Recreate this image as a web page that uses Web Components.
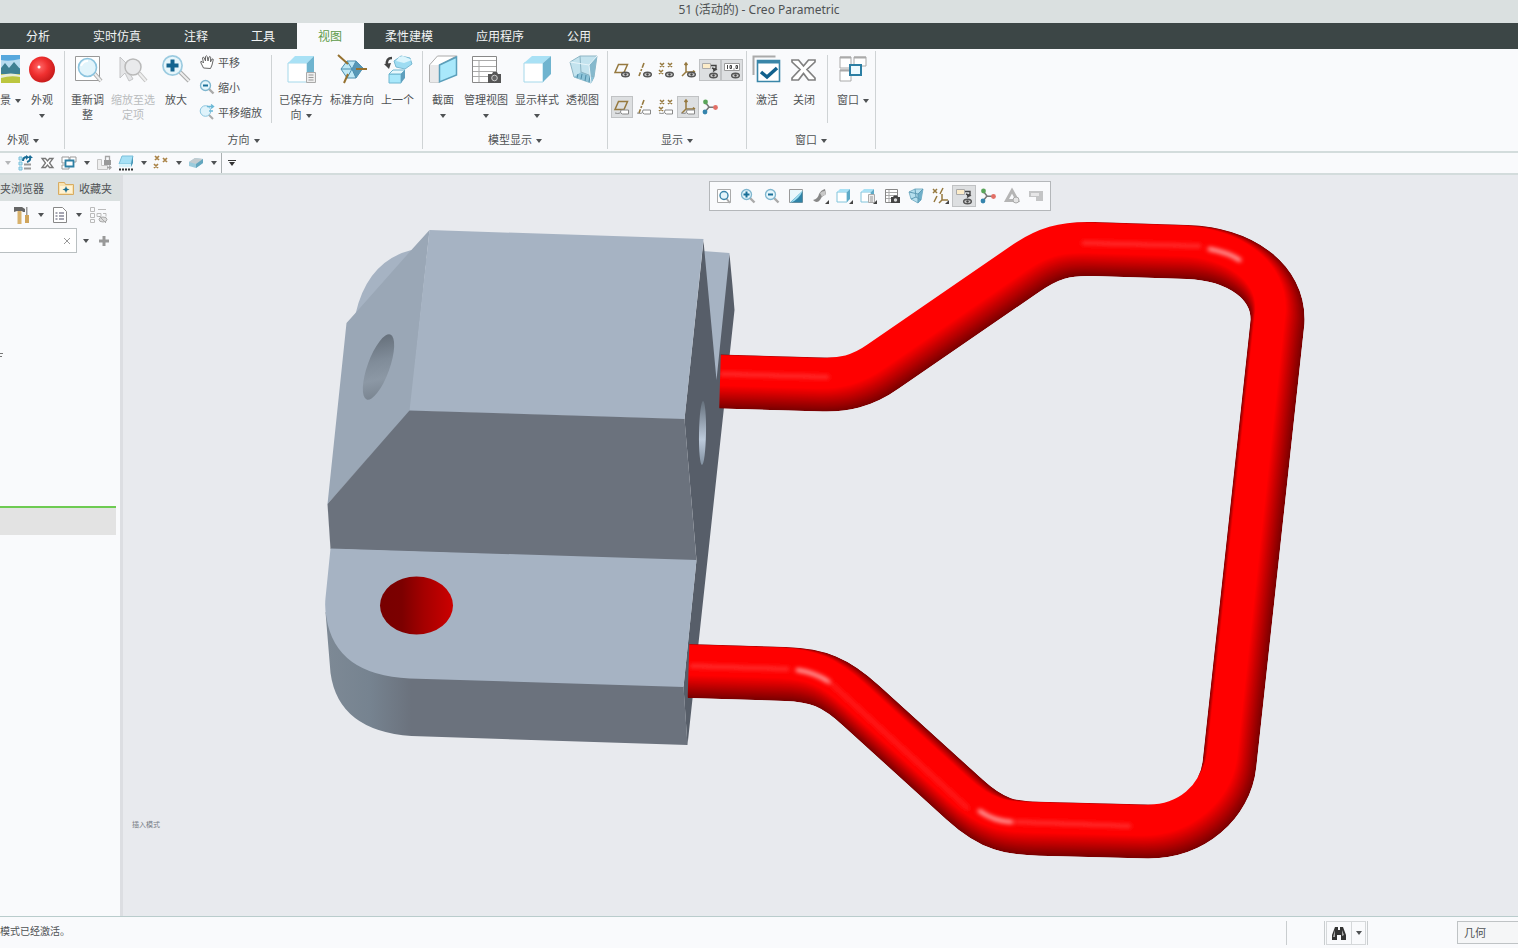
<!DOCTYPE html>
<html lang="zh-CN">
<head>
<meta charset="utf-8">
<title>51 (活动的) - Creo Parametric</title>
<style>
  html, body {
    height: 100%;
    margin: 0;
  }
  body {
    font-family: "Noto Sans", "Noto Sans CJK SC", sans-serif;
    font-size: 11px;
    color: #4f5254;
    overflow: hidden;
    --panel: #f9fafc;
    --bar: #dae0e0;
    --line: #d3dcdc;
  }
</style>
</head>
<body>
<app-window></app-window>

<script>
// Shared icon pieces, drawn on a 16px or a 28px grid
const eye = `<ellipse cx="11.500" cy="12.500" rx="3.800" ry="2.300" fill="#ccc" stroke="#555" stroke-width="1.500"/><circle cx="11.500" cy="12.500" r="1.200" fill="#444"/>`;
const tag = `<path d="M6 14q-2 1-5 0M7 11h7.500v4h-6q-2-.5-2-2z" fill="#fff" stroke="#888"/>`;
const plane = `<path d="M4.500 2.500h9l-3.500 8h-9z" fill="none" stroke="#96793f" stroke-width="1.500"/>`;
const axis = `<path d="M8 1L3 14" fill="none" stroke="#96793f" stroke-width="1.600" stroke-dasharray="5 1.500 2 1.500"/>`;
const points = `<path d="M2 1l4 4M6 1L2 5M10 1l4 4M14 1l-4 4M1 8l4 4M5 8l-4 4" fill="none" stroke="#96793f" stroke-width="1.500"/>`;
const csys = `<path d="M6 1v9l9 0M6 10l-4 4M4.500 3L6 1l1.500 2M13 8.500l2 1.500" fill="none" stroke="#96793f" stroke-width="1.500"/>`;
const camera = `<path d="M7 9h2l1-1.500h3L14 9h2v6H7z" fill="#444"/><circle cx="11.500" cy="12" r="1.700" fill="#ddd"/>`;
const lens = (sign) => `<path d="M10 10l4.500 4.500" stroke="#aaa" stroke-width="2.400"/><circle cx="6.500" cy="6.500" r="5" fill="#e4f5fb" stroke="#7fb6cf" stroke-width="1.300"/>${sign}`;
const blueSign = (d) => `<path d="${d}" stroke="#1a6f98" stroke-width="2"/>`;

const ICONS = {
  scene: [20, 28, `<path fill="#57a8dd" d="M0 0h19v28H0z"/><path fill="#b8dcef" d="M0 5q8 2 19-1v9H0z"/><path fill="#3e8092" d="M0 13l4-5 4 5 5-6 6 7v7H0z"/><path fill="#bcc63f" d="M0 19h19v9H0z"/><path fill="#e8ecd8" d="M0 20q10-3 19 0v2q-9-2-19 1z"/>`],
  ball: [28, 28, `<radialGradient id="b" cx=".4" cy=".4" r=".65"><stop offset="0" stop-color="#ff6a6a"/><stop offset=".5" stop-color="#f03030"/><stop offset="1" stop-color="#c31818"/></radialGradient><circle cx="14" cy="14.500" r="13" fill="url(#b)"/><circle cx="11" cy="12" r="1.500" fill="#fff"/>`],
  refit: [28, 28, `<path d="M1.500 1.500h24v24h-24z" fill="#fff" stroke="#999"/><path d="M20 18l7 8" stroke="#aaa" stroke-width="4"/><path d="M20 18l7 8" stroke="#eee" stroke-width="2"/><circle cx="13.500" cy="12.500" r="9" fill="#e2f4fb" stroke="#8cc4df" stroke-width="1.600"/><path d="M7 11q2-5 7-5" fill="none" stroke="#fff" stroke-width="2"/>`],
  zoomsel: [28, 28, `<path d="M1 2v21l5-5 4 8 4-2-4-7h6z" fill="#e4e5e7" stroke="#c4c5c7"/><path d="M20 18l7 8" stroke="#c2c2c2" stroke-width="4"/><path d="M20 18l7 8" stroke="#eee" stroke-width="2"/><circle cx="14" cy="12" r="8" fill="#e9eaec" stroke="#b9b9b9" stroke-width="1.500"/>`],
  zoomin: [28, 28, `<path d="M18 17l9 9" stroke="#aaa" stroke-width="4"/><path d="M18 17l9 9" stroke="#eee" stroke-width="2"/><circle cx="10.500" cy="10.500" r="9.600" fill="#e8f6fb" stroke="#9ccbe0" stroke-width="1.700"/><path d="M10.500 4.500v12M4.500 10.500h12" stroke="#14648f" stroke-width="4"/>`],
  hand: [16, 16, `<path d="M4.500 14L2 9q-1-2 1-1.500L4.500 9 3.500 4q.5-1.500 1.500-.5L6.500 7 6.500 2.500q.8-1.500 1.700 0L9 7l1-4q1-1.200 1.700.2L11.500 8l1.500-3q1.500-.5 1.200 1L13 11l-1.500 3.500z" fill="#fff" stroke="#666"/>`],
  zoomout: [16, 16, lens(blueSign("M4 6.500h5"))],
  panzoom: [16, 16, `<path d="M9 10l5 5" stroke="#aaa" stroke-width="2"/><circle cx="6.500" cy="7" r="5.300" fill="#dff3fb" stroke="#8cc6e0"/><path d="M8 2.500h6M12 .5l2.500 2-2.500 2M14 7h-4" fill="none" stroke="#6bb8d6" stroke-width="1.400"/>`],
  savedview: [28, 28, `<path d="M1 8h19v19H1z" fill="#fff" stroke="#a5d8ea"/><path d="M1 8l7-7h19l-7 7z" fill="#a9e1f5"/><path d="M20 8l7-7v18l-7 8z" fill="#6fb4cf"/><path d="M19.500 17.500h9v10h-9z" fill="#eee" stroke="#aaa"/><path d="M21.500 20h5M21.500 22.500h5M21.500 25h5" stroke="#999"/>`],
  stdview: [28, 28, `<path d="M3 14l6-8h9l7 7-7 10H9z" fill="#bfe8f5" stroke="#4c8fb0"/><path d="M14 14l4-8 7 7-7 10z" fill="#5898b7"/><path d="M3 14h11l4-8M14 14l-5 9M9 6l5 8 4 9" fill="none" stroke="#4c8fb0"/><path d="M0 0l10 9M18 14h11M10 19l-4 9" stroke="#96712f" stroke-width="2"/>`],
  prevview: [28, 28, `<path d="M10 6l7-5 9 2 2 6-7 5-9-2z" fill="#9edcf2" stroke="#7ab9d2"/><path d="M12 6l8 2 8-3-9-4-4 1z" fill="#dbf5fd"/><path d="M5 19h12v9H5z" fill="#a9e8fb" stroke="#6fb6d0"/><path d="M5 19l4-4h12l-4 4z" fill="#e6f8fd" stroke="#6fb6d0"/><path d="M17 19l4-4v8l-4 5z" fill="#5f9fbd"/><path d="M8 3Q2 3 3 10" fill="none" stroke="#444" stroke-width="2.500"/><path d="M0 9l7-1-2 6z" fill="#444"/>`],
  section: [28, 28, `<path d="M.5 10l8-9h19l-17 9v17H.5z" fill="#fff" stroke="#aaa"/><path d="M1 10h9v17H1z" fill="#e9e9ea"/><path d="M10.500 10l17-8v18l-17 7z" fill="#a9e8fb" stroke="#5b9fbb" stroke-width="1.500"/>`],
  manage: [28, 28, `<path d="M.5 1.500h24v26H.5z" fill="#fff" stroke="#888"/><path d="M7 5v22M1 5.500h23M1 11.500h23M1 16.500h23M1 21.500h23" stroke="#aaa"/><path d="M16 19h4l1-2h4l1 2h3v9H16z" fill="#555"/><circle cx="22.500" cy="23" r="2.800" fill="#666" stroke="#ccc"/>`],
  cube: [28, 28, `<path d="M1 8h19v19H1z" fill="#fff" stroke="#a5d8ea"/><path d="M1 8l8-7h19l-8 7z" fill="#a9e1f5"/><path d="M20 8l8-7v18l-8 8z" fill="#6fb4cf"/>`],
  persp: [28, 28, `<path d="M1 7l10-6h17l-3 21-3 6L5 22z" fill="#c3e3ee" stroke="#8fb6c5"/><path d="M20 10l8-9-3 21-3 6z" fill="#86b9cd"/><path d="M5 22l7-5 13 5-3 6z" fill="#8cc3d8"/><path d="M11 1l1 16M12 17l13 5" fill="none" stroke="#8ab3c3"/><path d="M9 19l-1 4M13 19l-1 5M17 20l-1 6M21 21l-1 6" stroke="#4f8da8"/><path d="M1 7l19 3 8-9M20 10l2 18" fill="none" stroke="#e8f5fa"/>`],
  activate: [28, 28, `<path d="M.5 20V1.500h22" fill="none" stroke="#aaa" stroke-width="2"/><path d="M4.500 5.500h22v21h-22z" fill="#fff" stroke="#3a86a8" stroke-width="1.600"/><path d="M4 7h23" stroke="#3a86a8" stroke-width="3"/><path d="M8 17l6 5 10-9" fill="none" stroke="#11618d" stroke-width="3.500"/>`],
  closebig: [28, 28, `<path d="M2 5h6.500l5 6 5-6H25v2l-8 7.500 8 8.500v2h-6.500l-5-6.500-5 6.500H2v-2l8-8.500L2 7z" fill="#fff" stroke="#808080" stroke-width="1.700"/>`],
  windows: [28, 28, `<g fill="#fff" stroke="#aaa"><path d="M1 2h11v11H1zM15 2h12v9H15zM1 15h11v11H1z"/></g><path d="M1 2.500h11M15 2.500h12M1 15.500h11" stroke="#aaa" stroke-width="2"/><path d="M11 10h11v10H11z" fill="#eefaff" stroke="#2c7fa4" stroke-width="2"/>`],
  planeEye: [16, 16, plane + eye], axisEye: [16, 16, axis + eye], pointsEye: [16, 16, points + eye], csysEye: [16, 16, csys + eye],
  planeTag: [16, 16, plane + tag], axisTag: [16, 16, axis + tag], pointsTag: [16, 16, points + tag], csysTag: [16, 16, csys + tag],
  annot: [16, 16, `<path d="M.5 1.500h8v5h-8z" fill="#fcecc9" stroke="#aaa"/><path d="M9 3.500h5v4h-3M10 6l4 1.500-3 2" fill="none" stroke="#444" stroke-width="1.400"/><g transform="translate(0 1)">${eye}</g>`],
  dims: [16, 16, `<path d="M.5 1.500h15v7H.5z" fill="#fff" stroke="#999"/><path d="M3.500 3v4M6 3.500h1.500v3H6zM9.500 7h1M12 3.500h1.500v3H12z" fill="none" stroke="#444"/><g transform="translate(0 1)">${eye}</g>`],
  spin: [16, 16, `<path d="M3.500 3.500L7 8l7 .5M7 8l-4 5" fill="none" stroke="#777" stroke-width="1.500"/><circle cx="3.500" cy="3" r="2.400" fill="#5aa55a"/><circle cx="13.500" cy="8.500" r="2.400" fill="#e26f66"/><circle cx="3" cy="13" r="2.400" fill="#3584ad"/>`],
  regen: [16, 16, `<path d="M2 2h3v3H2zM2 7h3v3H2zM2 12h3v3H2z" fill="#b9e5f5" stroke="#7cc0da"/><path d="M7 9.500h7M7 13.500h7" stroke="#999" stroke-width="2"/><path d="M6 6Q6 2 10 2M13 2q1 4-3 5" fill="none" stroke="#1b6d96" stroke-width="2"/><path d="M9 0l3 2-3 3zM11 3l2-3 3 3z" fill="#1b6d96"/>`],
  close: [16, 16, `<path d="M3 3.500h3.500L8.500 6l2-2.500H14L10.500 8l3.500 4.500h-3.500l-2-2.500-2 2.500H3L6.500 8z" fill="#fff" stroke="#777" stroke-width="1.300"/>`],
  windowsSmall: [16, 16, `<path d="M1 2h7v6H1zM9 2h6v5H9zM1 10h7v4H1z" fill="#fff" stroke="#999"/><path d="M4.500 5.500h8v6h-8z" fill="#fff" stroke="#2c7fa4" stroke-width="1.800"/>`],
  lock: [16, 16, `<path d="M1.500 4.500h4v6h6v4h-10z" fill="#eee" stroke="#c4c4c4"/><path d="M8 5h7v5H8z" fill="#999"/><path d="M9.500 5V1.500h4V5M11 12.500h4M13 10.500l2 2-2 2" fill="none" stroke="#a5a5a5" stroke-width="1.300"/>`],
  shade: [16, 16, `<path d="M1 9l3-8h11l-2 8z" fill="#a7e1f6" stroke="#7bc0da"/><path d="M1 9h12v3H1z" fill="#d9f3fb"/><path d="M13 9l2-8v7l-2 4z" fill="#4798b9"/><path d="M1 14.500h14" stroke="#333" stroke-width="2" stroke-dasharray="2 1"/>`],
  pointsOnly: [16, 16, `<path d="M2 1l4 4M6 1L2 5M10 3l4 4M14 3l-4 4M1 9l4 4M5 9l-4 4" stroke="#a98245" stroke-width="1.700"/>`],
  eraser: [16, 16, `<path d="M1 7l6-4 8 1v4l-7 5-7-2z" fill="#9bcbdc"/><path d="M1 7l6-4 8 1-7 5z" fill="#c3ccd0"/><path d="M8 9l7-5v4l-7 5z" fill="#63a6be"/>`],
  folder: [16, 16, `<path d="M.5 2.500h6l1 2h8v10H.5z" fill="#f8e2b0" stroke="#d8ac62"/><path d="M2 6h12v7H2z" fill="#fff2d2"/><path d="M8 6l1 2.500 2.500 1L9 10.500 8 13l-1-2.500-2.500-1L7 8.500z" fill="#1c6f93"/>`],
  tools: [16, 16, `<path d="M0 0h8l3 2v3H9L8 4H3L0 5z" fill="#666"/><path d="M3.500 4h4v13h-4z" fill="#d8b26d"/><path d="M12 0h1.500v8H12z" fill="#999"/><path d="M11 8h4v8h-4z" fill="#cfa45b"/>`],
  list: [16, 16, `<path d="M1.500.5h9l4 4v11h-13z" fill="#fff" stroke="#888"/><path d="M3.500 6h2M3.500 9h2M3.500 12h2M7 6h5M7 9h5M7 12h5" stroke="#889" stroke-width="1.300"/>`],
  treehide: [16, 16, `<path d="M.5.500h4v4h-4zM.5 6.500h4v4h-4zM.5 12.500h4v3h-4zM8 2.500h8M7 6.500h4v3H7zM13 6.500h3v3" fill="none" stroke="#bbb"/><ellipse cx="13" cy="12.500" rx="4" ry="2.500" fill="#ddd" stroke="#aaa"/><path d="M9 9l7 7" stroke="#aaa"/>`],
  plus: [16, 16, `<path d="M8 3v10M3 8h10" stroke="#999" stroke-width="3"/>`],
  fitSmall: [16, 16, `<path d="M1.500 1.500h13v13h-13z" fill="#fff" stroke="#aaa"/><path d="M10 10l4 5" stroke="#aaa" stroke-width="2"/><circle cx="8" cy="7.500" r="4" fill="#e4f5fb" stroke="#3b86ab" stroke-width="1.400"/>`],
  zoominSmall: [16, 16, lens(blueSign("M3.500 6.500h6M6.500 3.500v6"))],
  repaint: [16, 16, `<path d="M1.500 1.500h13v13h-13z" fill="#eaf8fd" stroke="#999"/><path d="M14.500 3v11.500H2z" fill="#2f83a7"/><path d="M2 15Q11 12 15 2l-5 5z" fill="#9cdcf0"/>`],
  style: [16, 16, `<path d="M1 12q5-1 6-6 2-4 6-5l1 5q-4 2-6 6-3 4-7 0z" fill="#888"/><path d="M8 5q2-2 5-2l1 4q-3 0-4 2z" fill="#c8c8c8"/><path d="M17 12v4h-4z" fill="#444"/>`],
  cubeSmall: [16, 16, `<path d="M1 4h10v10H1z" fill="#fff" stroke="#82c4db"/><path d="M1 4l3-3h10l-3 3z" fill="#a9e1f5"/><path d="M11 4l3-3v10l-3 3z" fill="#5eaac7"/><path d="M17 12v4h-4z" fill="#444"/>`],
  savedSmall: [16, 16, `<path d="M1 4h10v10H1z" fill="#fff" stroke="#82c4db"/><path d="M1 4l3-3h10l-3 3z" fill="#a9e1f5"/><path d="M11 4l3-3v10l-3 3z" fill="#5eaac7"/><path d="M8.500 6.500h6v8h-6z" fill="#eee" stroke="#aaa"/><path d="M10 9h3M10 11h3M10 13h3" stroke="#999"/><path d="M17 12v4h-4z" fill="#444"/>`],
  manageSmall: [16, 16, `<path d="M1.500 1.500h12v13h-12z" fill="#fff" stroke="#888"/><path d="M5 2v12M2 4.500h11M2 7.500h11M2 10.500h11" stroke="#aaa"/>${camera}`],
  perspSmall: [16, 16, `<path d="M1 4l6-3h8l-2 11-3 3-7-4z" fill="#b5dfee" stroke="#7fb4c9"/><path d="M10 6l5-5-2 11-3 3z" fill="#6fafc9"/><path d="M1 4l9 2 5-5M10 6v9M7 1l1 8 5 3M8 9l-5 2" fill="none" stroke="#5f9bb5"/>`],
  datum: [16, 16, `<path d="M1 1l4 4M5 1L1 5M11 0L8 6M5 8l-3 6M10 6v6h6M10 12l-3 3" fill="none" stroke="#96793f" stroke-width="1.500"/><path d="M17 12v4h-4z" fill="#444"/>`],
  sim: [16, 16, `<path d="M8 2.500l5.500 10h-11z" fill="none" stroke="#b5b5b5" stroke-width="3"/><circle cx="12" cy="12" r="3" fill="#e4e4e4" stroke="#aaa"/>`],
  flag: [16, 16, `<path d="M1 3h14v10H8V9H1z" fill="#c4c5c6"/><path d="M3 5h8v3H3z" fill="#e6e6e7"/>`],
  find: [16, 16, `<path d="M4 2h3v3h2V2h3l3 8v5h-5v-5H6v5H1v-5z" fill="#333"/><path d="M4 5l-2 7h2zM11 5v6l2-1z" fill="#aaa"/>`]
};

class CreoIcon extends HTMLElement {
  constructor() {
    super();
    this.attachShadow({ mode: "open" });
  }

  connectedCallback() {
    const [w, h, art] = ICONS[this.getAttribute("name")];
    this.shadowRoot.innerHTML = `
      <style>
        :host { display: inline-flex; flex: none; }
        svg { display: block; overflow: visible; }
      </style>
      <svg width="${w}" height="${h}" viewBox="0 0 ${w} ${h}" aria-hidden="true">${art}</svg>
    `;
  }
}
customElements.define("creo-icon", CreoIcon);

class DropCaret extends HTMLElement {
  constructor() {
    super();
    this.attachShadow({ mode: "open" });
    this.shadowRoot.innerHTML = `
      <style>
        :host {
          display: inline-block;
          vertical-align: middle;
          width: 0;
          height: 0;
          border: 3px solid transparent;
          border-top: 4px solid currentColor;
          border-bottom: 0;
        }
        :host([dim]) { opacity: .4; }
        :host([after]) { margin-left: 4px; }
      </style>
    `;
  }
}
customElements.define("drop-caret", DropCaret);

// Large ribbon command: icon on top, one or two label lines under it
class RibbonButton extends HTMLElement {
  constructor() {
    super();
    this.attachShadow({ mode: "open" });
  }

  connectedCallback() {
    const label = this.getAttribute("label").replace("|", "<br>");
    const caret = this.getAttribute("caret");
    this.shadowRoot.innerHTML = `
      <style>
        :host { display: block; }
        button {
          display: flex;
          flex-direction: column;
          align-items: center;
          gap: 9px;
          padding: 6px 0 0;
          border: 0;
          background: none;
          font: inherit;
          line-height: 15px;
          color: inherit;
          white-space: nowrap;
        }
        button:disabled { color: #b9bcbe; }
      </style>
      <button ${this.hasAttribute("disabled") ? "disabled" : ""}>
        <creo-icon name="${this.getAttribute("icon")}"></creo-icon>
        <span>${label}${caret === "below" ? "<br>" : ""}${caret ? `<drop-caret ${caret === "below" ? "" : "after"}></drop-caret>` : ""}</span>
      </button>
    `;
  }
}
customElements.define("ribbon-button", RibbonButton);

// Small command with optional text at its right; pressed shows the toggled look
class ToolButton extends HTMLElement {
  constructor() {
    super();
    this.attachShadow({ mode: "open" });
  }

  connectedCallback() {
    this.shadowRoot.innerHTML = `
      <style>
        :host { display: block; }
        button {
          display: flex;
          align-items: center;
          justify-content: center;
          gap: 3px;
          width: 100%;
          height: 100%;
          padding: 0;
          border: 1px solid transparent;
          background: none;
          font: inherit;
          color: inherit;
          white-space: nowrap;
        }
        :host([text]) button { justify-content: flex-start; border: 0; }
        :host([pressed]) button { background: #dddfe1; border-color: #c0c2c4; }
      </style>
      <button title="${this.getAttribute("tip") || ""}" aria-pressed="${this.hasAttribute("pressed")}">
        <creo-icon name="${this.getAttribute("icon")}"></creo-icon><slot></slot>
      </button>
    `;
  }
}
customElements.define("tool-button", ToolButton);

class CaretButton extends HTMLElement {
  constructor() {
    super();
    this.attachShadow({ mode: "open" });
  }

  connectedCallback() {
    this.shadowRoot.innerHTML = `
      <style>
        :host { display: block; width: 13px; }
        button {
          display: flex;
          align-items: center;
          justify-content: center;
          width: 100%;
          height: 100%;
          padding: 0;
          border: 0;
          background: none;
          color: inherit;
        }
      </style>
      <button aria-label="更多"><drop-caret ${this.hasAttribute("dim") ? "dim" : ""}></drop-caret></button>
    `;
  }
}
customElements.define("caret-button", CaretButton);

class RibbonGroup extends HTMLElement {
  constructor() {
    super();
    this.attachShadow({ mode: "open" });
  }

  connectedCallback() {
    this.shadowRoot.innerHTML = `
      <style>
        :host {
          display: flex;
          flex-direction: column;
          justify-content: space-between;
          margin: 2px 0;
          border-right: 1px solid #cfd3d5;
        }
        .tools {
          display: flex;
          gap: 7px;
          padding: 0 8px 0 6px;
          margin-top: -2px;
        }
        /* the first group runs out of the window on the left */
        :host([cut]) { margin-left: -18px; }
        :host([cut]) .tools { padding-left: 18px; }
        :host([tight]) .tools { padding: 0 3px; }
        :host([wide]) .tools { gap: 9px; padding-right: 6px; }
        button {
          padding: 0;
          border: 0;
          background: none;
          font: inherit;
          line-height: 18px;
          color: inherit;
        }
      </style>
      <div class="tools"><slot></slot></div>
      <button>${this.getAttribute("caption")}<drop-caret after></drop-caret></button>
    `;
  }
}
customElements.define("ribbon-group", RibbonGroup);

class RibbonTabs extends HTMLElement {
  constructor() {
    super();
    this.attachShadow({ mode: "open" });
  }

  connectedCallback() {
    const tabs = ["分析", "实时仿真", "注释", "工具", "视图", "柔性建模", "应用程序", "公用"];
    this.shadowRoot.innerHTML = `
      <style>
        :host {
          display: flex;
          height: 26px;
          padding-left: 5px;
          background: #3c4646;
        }
        button {
          padding: 0 22px 0 21px;
          border: 0;
          background: none;
          font: inherit;
          font-size: 12px;
          color: #f2f4f4;
        }
        button[aria-selected="true"] { background: var(--panel); color: #5c9a48; }
      </style>
      ${tabs.map((t) => `<button role="tab" aria-selected="${t === "视图"}">${t}</button>`).join("")}
    `;
  }
}
customElements.define("ribbon-tabs", RibbonTabs);

class CreoRibbon extends HTMLElement {
  constructor() {
    super();
    this.attachShadow({ mode: "open" });
    this.shadowRoot.innerHTML = `
      <style>
        :host {
          display: flex;
          height: 102px;
          background: var(--panel);
          border-bottom: 2px solid var(--line);
        }
        .stack {
          display: grid;
          grid-auto-rows: 25px;
          padding: 0 2px;
        }
        .rule { width: 1px; margin: 6px 0; height: 68px; background: #cfd3d5; }
        .grid {
          display: grid;
          grid-template-columns: repeat(6, 22px);
          grid-auto-rows: 22px;
          row-gap: 15px;
          padding-top: 10px;
        }
      </style>
      <ribbon-group caption="外观" cut>
        <ribbon-button icon="scene" label="景" caret="inline"></ribbon-button>
        <ribbon-button icon="ball" label="外观" caret="below"></ribbon-button>
      </ribbon-group>
      <ribbon-group caption="方向">
        <ribbon-button icon="refit" label="重新调|整"></ribbon-button>
        <ribbon-button icon="zoomsel" label="缩放至选|定项" disabled></ribbon-button>
        <ribbon-button icon="zoomin" label="放大"></ribbon-button>
        <div class="stack">
          <tool-button text icon="hand">平移</tool-button>
          <tool-button text icon="zoomout">缩小</tool-button>
          <tool-button text icon="panzoom">平移缩放</tool-button>
        </div>
        <div class="rule"></div>
        <ribbon-button icon="savedview" label="已保存方|向" caret="inline"></ribbon-button>
        <ribbon-button icon="stdview" label="标准方向"></ribbon-button>
        <ribbon-button icon="prevview" label="上一个"></ribbon-button>
      </ribbon-group>
      <ribbon-group caption="模型显示">
        <ribbon-button icon="section" label="截面" caret="below"></ribbon-button>
        <ribbon-button icon="manage" label="管理视图" caret="below"></ribbon-button>
        <ribbon-button icon="cube" label="显示样式" caret="below"></ribbon-button>
        <ribbon-button icon="persp" label="透视图"></ribbon-button>
      </ribbon-group>
      <ribbon-group caption="显示" tight>
        <div class="grid">
          <tool-button icon="planeEye" tip="平面显示"></tool-button>
          <tool-button icon="axisEye" tip="轴显示"></tool-button>
          <tool-button icon="pointsEye" tip="点显示"></tool-button>
          <tool-button icon="csysEye" tip="坐标系显示"></tool-button>
          <tool-button icon="annot" tip="注释显示" pressed></tool-button>
          <tool-button icon="dims" tip="尺寸显示" pressed></tool-button>
          <tool-button icon="planeTag" tip="平面标记显示" pressed></tool-button>
          <tool-button icon="axisTag" tip="轴标记显示"></tool-button>
          <tool-button icon="pointsTag" tip="点标记显示"></tool-button>
          <tool-button icon="csysTag" tip="坐标系标记显示" pressed></tool-button>
          <tool-button icon="spin" tip="旋转中心"></tool-button>
        </div>
      </ribbon-group>
      <ribbon-group caption="窗口" wide>
        <ribbon-button icon="activate" label="激活"></ribbon-button>
        <ribbon-button icon="closebig" label="关闭"></ribbon-button>
        <div class="rule"></div>
        <ribbon-button icon="windows" label="窗口" caret="inline"></ribbon-button>
      </ribbon-group>
    `;
  }
}
customElements.define("creo-ribbon", CreoRibbon);

class QuickBar extends HTMLElement {
  constructor() {
    super();
    this.attachShadow({ mode: "open" });
    this.shadowRoot.innerHTML = `
      <style>
        :host {
          display: flex;
          height: 20px;
          padding-left: 1px;
          background: var(--panel);
          border-bottom: 2px solid var(--line);
        }
        tool-button { width: 22px; }
        .end {
          display: flex;
          margin-left: 1px;
          padding-left: 4px;
          border-left: 1px solid #aab0b2;
        }
        .more {
          display: flex;
          flex-direction: column;
          align-items: center;
          justify-content: center;
          gap: 1px;
          border: 0;
          padding: 0 2px;
          background: none;
          color: #333;
        }
        .more::before { content: ""; width: 8px; height: 1px; background: #333; }
      </style>
      <caret-button dim></caret-button>
      <tool-button icon="regen" tip="重新生成"></tool-button>
      <tool-button icon="close" tip="关闭"></tool-button>
      <tool-button icon="windowsSmall" tip="窗口"></tool-button>
      <caret-button></caret-button>
      <tool-button icon="lock" tip="锁定"></tool-button>
      <tool-button icon="shade" tip="显示样式"></tool-button>
      <caret-button></caret-button>
      <tool-button icon="pointsOnly" tip="点"></tool-button>
      <caret-button></caret-button>
      <tool-button icon="eraser" tip="移除"></tool-button>
      <caret-button></caret-button>
      <div class="end"><button class="more" aria-label="自定义"><drop-caret></drop-caret></button></div>
    `;
  }
}
customElements.define("quick-bar", QuickBar);

class ModelTree extends HTMLElement {
  constructor() {
    super();
    this.attachShadow({ mode: "open" });
    this.shadowRoot.innerHTML = `
      <style>
        :host {
          display: flex;
          flex-direction: column;
          flex: none;
          width: 120px;
          background: var(--panel);
          border-right: 3px solid #dcdee2;
        }
        nav {
          display: flex;
          align-items: center;
          gap: 14px;
          height: 26px;
          background: var(--bar);
        }
        nav button {
          display: flex;
          align-items: center;
          gap: 5px;
          padding: 0;
          border: 0;
          background: none;
          font: inherit;
          color: inherit;
        }
        .tools, .search { display: flex; align-items: center; }
        .tools { height: 27px; padding-left: 10px; }
        .tools tool-button { width: 24px; }
        .tools caret-button { width: 14px; }
        .field {
          display: flex;
          align-items: center;
          width: 77px;
          height: 25px;
          border: 1px solid #b9bfc1;
          border-left: 0;
          box-sizing: border-box;
          background: #fff;
        }
        .field input {
          flex: 1;
          min-width: 0;
          border: 0;
          padding: 0;
          background: none;
          font: inherit;
        }
        .field button {
          width: 18px;
          padding: 0;
          border: 0;
          background: none;
        }
        .field svg { display: block; margin: auto; }
        .search caret-button { width: 17px; }
        .search tool-button { width: 20px; }
        .node { display: block; margin-top: 98px; }
        .insert {
          height: 27px;
          margin: 147px 4px 0 0;
          border-top: 2px solid #6ecb52;
          background: #e3e3e3;
        }
      </style>
      <nav>
        <button>夹浏览器</button>
        <button><creo-icon name="folder"></creo-icon>收藏夹</button>
      </nav>
      <div class="tools">
        <tool-button icon="tools" tip="设置"></tool-button><caret-button></caret-button>
        <tool-button icon="list" tip="显示"></tool-button><caret-button></caret-button>
        <tool-button icon="treehide" tip="隐藏"></tool-button>
      </div>
      <div class="search">
        <div class="field">
          <input type="text" aria-label="搜索">
          <button aria-label="清除"><svg width="8" height="8" viewBox="0 0 8 8"><path d="M1 1l6 6M7 1L1 7" stroke="#999"/></svg></button>
        </div>
        <caret-button></caret-button>
        <tool-button icon="plus" tip="添加"></tool-button>
      </div>
      <svg class="node" width="4" height="8" viewBox="0 0 4 8"><path d="M0 2.500h3M0 5.500h2" stroke="#777"/></svg>
      <div class="insert"></div>
    `;
  }
}
customElements.define("model-tree", ModelTree);

// The shaded part: clevis block with a bent red handle
class ModelView extends HTMLElement {
  constructor() {
    super();
    this.attachShadow({ mode: "open" });
  }

  connectedCallback() {
    const rod = "M720.500 381.500L824 384.500C843 385 862 382 884 366.300L1024 270C1048 253 1066 248 1094 249L1188 252C1240 254 1280 281 1278 322L1230 764C1226 802 1192 832 1148 831.500L1040 828.700C1012 828 994 826 965 799.500L862 706C836 682 818 675 786 674L689 671";
    // tube shading: narrower strokes drift towards the light, kept inside the tube by the mask
    const steps = 30;
    let tube = "";
    for (let i = 0; i <= steps; i++) {
      const t = i / steps;
      const width = 54 - 24 * t;
      const red = Math.round(122 + 133 * t);
      tube += `<path d="${rod}" stroke="rgb(${red},0,0)" stroke-width="${width.toFixed(1)}" transform="translate(${(-7 * t).toFixed(1)} ${(-11 * t).toFixed(1)})"/>`;
    }
    this.shadowRoot.innerHTML = `
      <style>
        :host { display: block; flex: 1; min-height: 0; }
        svg { display: block; width: 100%; height: 100%; }
      </style>
      <svg viewBox="124 175 1394 741" role="img" aria-label="模型">
        <defs>
          <linearGradient id="corner" gradientUnits="userSpaceOnUse" x1="328" y1="0" x2="412" y2="0">
            <stop offset="0" stop-color="#7d8995"/><stop offset=".5" stop-color="#768390"/><stop offset="1" stop-color="#6b727d"/>
          </linearGradient>
          <linearGradient id="redhole"><stop offset="0" stop-color="#780000"/><stop offset=".3" stop-color="#7c0000"/><stop offset=".6" stop-color="#a40000"/><stop offset="1" stop-color="#cc0000"/></linearGradient>
          <linearGradient id="hole" x1=".4" y1="0" x2=".6" y2="1"><stop offset="0" stop-color="#66707b"/><stop offset=".4" stop-color="#808c99"/><stop offset=".7" stop-color="#8c98a5"/><stop offset="1" stop-color="#7a8591"/></linearGradient>
          <linearGradient id="slot" x1="0" y1="0" x2="0" y2="1"><stop offset="0" stop-color="#65707c"/><stop offset=".6" stop-color="#bccadb"/><stop offset="1" stop-color="#8190a0"/></linearGradient>
          <filter id="soft" filterUnits="userSpaceOnUse" x="680" y="200" width="660" height="680"><feGaussianBlur stdDeviation="2"/></filter>
          <mask id="tube" maskUnits="userSpaceOnUse" x="600" y="175" width="918" height="741"><path d="${rod}" fill="none" stroke="#fff" stroke-width="54"/></mask>
        </defs>
        <path fill="#a6b3c3" d="M412 250Q368 261 356 314L380 330L430 260zM703 251L730 253L722 400L700 400z"/>
        <path fill="#575e69" d="M730 254L733 286L735 310L688 745L684 687L697 560L685 419L704 241L717 380z"/>
        <path fill="#9aa7b6" d="M430 230L411 251L356 313L347 323L328 504L411 411z"/>
        <path fill="#a6b3c3" d="M430 230L704 239L685 419.500L410 411z"/>
        <path fill="#6b727d" d="M410 410.500L685 419L697 561L331 549L328 504z"/>
        <path fill="url(#corner)" d="M326 612L331 673Q339 731 412 736L688 745L684 686L400 670z"/>
        <path fill="#a6b3c3" d="M331 548.500L697 560L684 687L410 678.500Q336 675 327 618Q325 608 326 598z"/>
        <ellipse cx="417" cy="605.500" rx="36.500" ry="29" fill="url(#redhole)"/>
        <ellipse cx="379" cy="367" rx="11" ry="34.500" transform="rotate(20 379 367)" fill="url(#hole)"/>
        <ellipse cx="703" cy="433" rx="3.500" ry="32" transform="rotate(1 703 433)" fill="url(#slot)"/>
        <g fill="none" mask="url(#tube)">
          ${tube}
          <g filter="url(#soft)" stroke="#ff3030" stroke-width="4" stroke-linecap="round">
            <path d="M722 374L828 377M1084 243L1200 246M692 666L788 669M1018 822L1130 826"/>
            <path d="M830 682L968 808" stroke="#ff2020"/>
            <path d="M1210 249Q1230 253 1240 260M798 670Q816 673 828 681M980 811Q994 821 1012 822" stroke="#ffa8a8"/>
          </g>
        </g>
      </svg>
    `;
  }
}
customElements.define("model-view", ModelView);

class ViewBar extends HTMLElement {
  constructor() {
    super();
    this.attachShadow({ mode: "open" });
  }

  connectedCallback() {
    const icons = ["fitSmall", "zoominSmall", "zoomout", "repaint", "style", "cubeSmall", "savedSmall", "manageSmall", "perspSmall", "datum", "annot", "spin", "sim", "flag"];
    this.shadowRoot.innerHTML = `
      <style>
        :host {
          display: flex;
          padding: 3px 2px;
          border: 1px solid #b4b7ba;
          background: var(--panel);
        }
        tool-button { width: 24px; height: 22px; }
      </style>
      ${icons.map((name) => `<tool-button icon="${name}" ${name === "annot" ? "pressed" : ""}></tool-button>`).join("")}
    `;
  }
}
customElements.define("view-bar", ViewBar);

class StatusBar extends HTMLElement {
  constructor() {
    super();
    this.attachShadow({ mode: "open" });
    this.shadowRoot.innerHTML = `
      <style>
        :host {
          display: flex;
          align-items: center;
          height: 31px;
          background: var(--panel);
          border-top: 1px solid #b9cccc;
        }
        .message {
          white-space: nowrap;
          font-size: 10px;
          line-height: 28px;
          align-self: flex-start;
        }
        .find {
          display: flex;
          margin-left: auto;
          padding-left: 37px;
          border-left: 1px solid #c9cdcf;
        }
        .find div {
          display: flex;
          height: 24px;
          padding: 0 1px;
          border: solid #c9cdcf;
          border-width: 0 1px;
        }
        .find tool-button { width: 26px; border: 1px solid #d5d8da; box-sizing: border-box; }
        .find caret-button { width: 14px; border: 1px solid #d5d8da; border-left: 0; box-sizing: border-box; }
        select {
          appearance: none;
          width: 61px;
          height: 23px;
          margin-left: 89px;
          padding: 0 6px;
          border: 1px solid #bfc3c5;
          border-right: 0;
          border-radius: 0;
          background: #f5f6f7;
          font: inherit;
          color: inherit;
        }
      </style>
      <span class="message">模式已经激活。</span>
      <div class="find">
        <div><tool-button icon="find" tip="查找"></tool-button><caret-button></caret-button></div>
      </div>
      <select aria-label="选择过滤器"><option>几何</option></select>
    `;
  }
}
customElements.define("status-bar", StatusBar);

class AppWindow extends HTMLElement {
  constructor() {
    super();
    this.attachShadow({ mode: "open" });
    this.shadowRoot.innerHTML = `
      <style>
        :host {
          display: flex;
          flex-direction: column;
          height: 100vh;
        }
        header {
          height: 23px;
          line-height: 19px;
          text-align: center;
          font-size: 12px;
          background: var(--bar);
        }
        main { display: flex; flex: 1; min-height: 0; }
        .canvas {
          position: relative;
          display: flex;
          flex: 1;
          min-width: 0;
          background: #e8eaee;
        }
        view-bar { position: absolute; top: 6px; left: 42%; }
        .mode {
          position: absolute;
          left: 9px;
          bottom: 85px;
          font-size: 7px;
          line-height: 12px;
          color: #777c84;
        }
      </style>
      <header>51 (活动的) - Creo Parametric</header>
      <ribbon-tabs></ribbon-tabs>
      <creo-ribbon></creo-ribbon>
      <quick-bar></quick-bar>
      <main>
        <model-tree></model-tree>
        <div class="canvas">
          <model-view></model-view>
          <view-bar></view-bar>
          <span class="mode">插入模式</span>
        </div>
      </main>
      <status-bar></status-bar>
    `;
  }
}
customElements.define("app-window", AppWindow);
</script>
</body>
</html>
